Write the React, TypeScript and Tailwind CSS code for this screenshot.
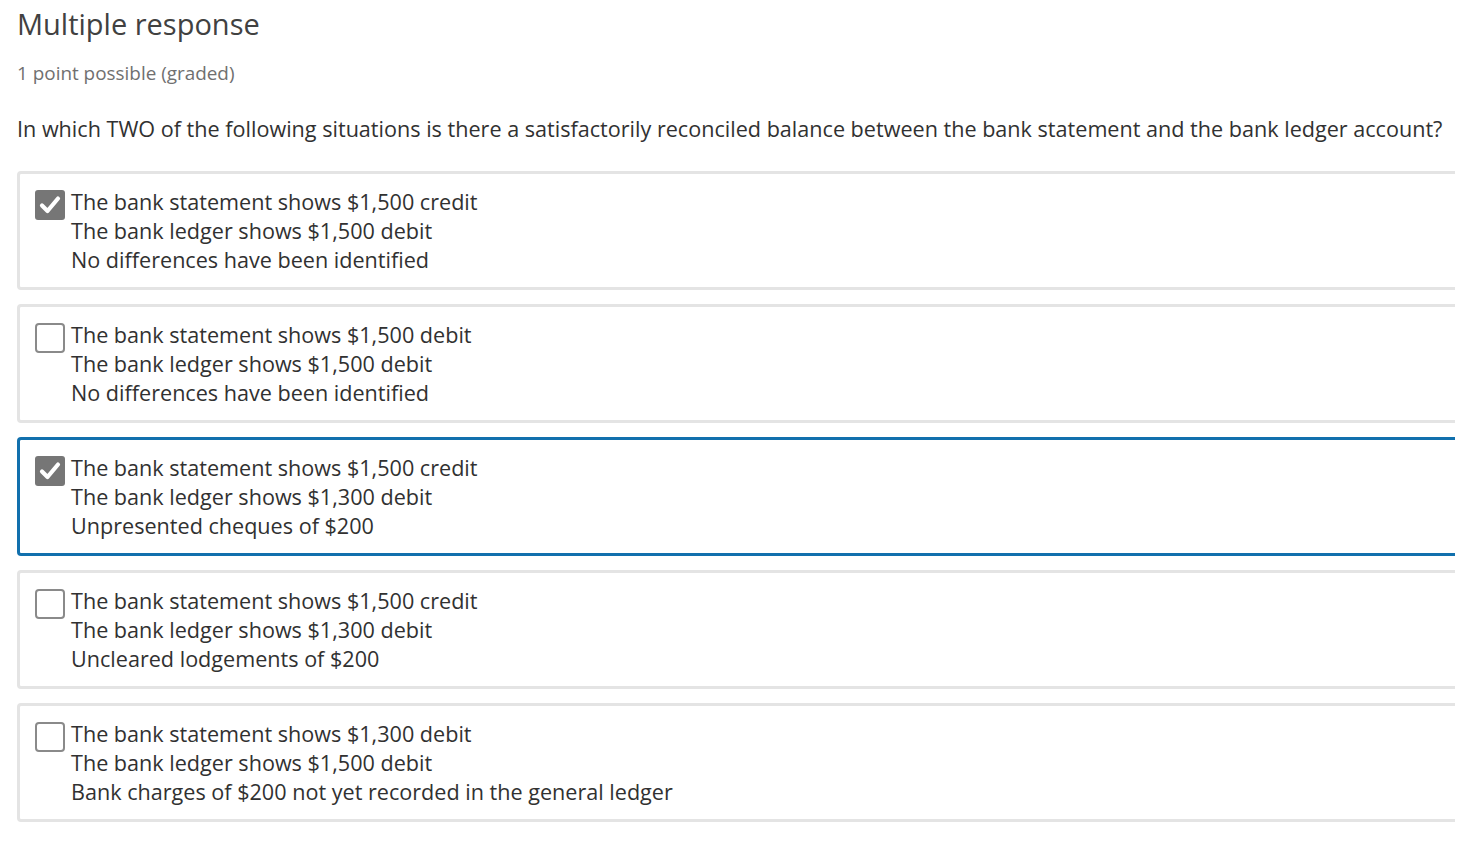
import React from "react";

const options = [
  { lines: ["The bank statement shows $1,500 credit", "The bank ledger shows $1,500 debit", "No differences have been identified"], checked: true, selected: false },
  { lines: ["The bank statement shows $1,500 debit", "The bank ledger shows $1,500 debit", "No differences have been identified"], checked: false, selected: false },
  { lines: ["The bank statement shows $1,500 credit", "The bank ledger shows $1,300 debit", "Unpresented cheques of $200"], checked: true, selected: true },
  { lines: ["The bank statement shows $1,500 credit", "The bank ledger shows $1,300 debit", "Uncleared lodgements of $200"], checked: false, selected: false },
  { lines: ["The bank statement shows $1,300 debit", "The bank ledger shows $1,500 debit", "Bank charges of $200 not yet recorded in the general ledger"], checked: false, selected: false },
];

function CheckBox({ checked }: { checked: boolean }) {
  if (checked) {
    return (
      <div className="w-[30px] h-[30px] rounded-[3px] bg-[#767676] flex items-center justify-center shrink-0">
        <svg width="24" height="24" viewBox="0 0 24 24">
          <path d="M4 12.5 L9.5 18 L20 5.5" fill="none" stroke="#ffffff" strokeWidth="4.2" strokeLinecap="round" strokeLinejoin="round" />
        </svg>
      </div>
    );
  }
  return <div className="w-[30px] h-[30px] rounded-[4px] border-2 border-[#8a8a8a] bg-white shrink-0" />;
}

export default function App() {
  return (
    <div className="min-h-[842px] bg-white pl-[17px] w-[1455px]" style={{ fontFamily: '"Open Sans", "Liberation Sans", sans-serif' }}>
      <h1 className="text-[29px] leading-[40px] text-[#414141] pt-[4px] font-normal">Multiple response</h1>
      <div className="text-[18.9px] text-[#707070] mt-[17px] leading-[24px]">1 point possible (graded)</div>
      <p className="text-[21.6px] text-[#313131] mt-[29px] leading-[30px]">
        In which TWO of the following situations is there a satisfactorily reconciled balance between the bank statement and the bank ledger account?
      </p>
      <div className="mt-[27px] flex flex-col gap-[14px]">
        {options.map((o, i) => (
          <div
            key={i}
            className={
              "h-[119px] border-[3px] border-r-0 rounded-l-[4px] pl-[15px] pt-[16px] flex gap-[6px] " +
              (o.selected ? "border-[#1170ad]" : "border-[#e4e4e4]")
            }
          >
            <div>
              <CheckBox checked={o.checked} />
            </div>
            <div className="text-[21.6px] leading-[29px] text-[#313131] -mt-[3px]">
              {o.lines.map((l, j) => (
                <div key={j}>{l}</div>
              ))}
            </div>
          </div>
        ))}
      </div>
    </div>
  );
}
